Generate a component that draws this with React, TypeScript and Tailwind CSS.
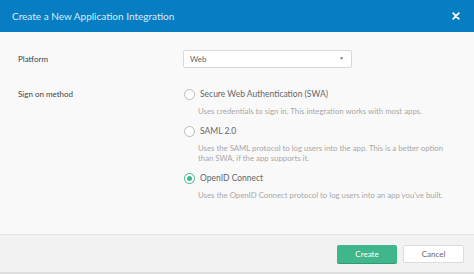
const options = [
  {
    label: "Secure Web Authentication (SWA)",
    desc: "Uses credentials to sign in. This integration works with most apps.",
  },
  {
    label: "SAML 2.0",
    desc: "Uses the SAML protocol to log users into the app. This is a better option than SWA, if the app supports it.",
  },
  {
    label: "OpenID Connect",
    desc: "Uses the OpenID Connect protocol to log users into an app you've built.",
  },
];

function Radio({ checked }: { checked?: boolean }) {
  return (
    <span
      className={`flex h-[11px] w-[11px] shrink-0 items-center justify-center rounded-full border bg-white ${
        checked ? "border-[#3fb68c]" : "border-[#b9b9b9]"
      }`}
    >
      {checked && <span className="h-[5px] w-[5px] rounded-full bg-[#3fb68c]" />}
    </span>
  );
}

export default function App() {
  return (
    <div
      className="flex h-[274px] w-[474px] flex-col bg-[#f9f9f9]"
      style={{ fontFamily: "Lato, 'Open Sans', sans-serif" }}
    >
      <div className="flex h-[32px] shrink-0 items-center justify-between bg-[#077ec3] pl-[12px] pr-[14px]">
        <span className="text-[10px] text-[#d6ecfa]">Create a New Application Integration</span>
        <svg className="h-[8px] w-[8px]" viewBox="0 0 10 10" aria-hidden>
          <path d="M1.5 1.5l7 7M8.5 1.5l-7 7" stroke="#fff" strokeWidth="2.2" strokeLinecap="round" />
        </svg>
      </div>

      <div className="flex-1 pl-[18px] pr-[20px] pt-[18px]">
        <div className="grid grid-cols-[165px_1fr] items-center">
          <span className="text-[8px] text-[#444]">Platform</span>
          <div className="flex h-[18px] w-[169px] items-center justify-between rounded-[2px] border border-[#d8d8d8] bg-white pl-[6px] pr-[7px]">
            <span className="text-[8px] text-[#666]">Web</span>
            <span className="text-[5px] text-[#777]">▼</span>
          </div>
        </div>

        <div className="mt-[20px] grid grid-cols-[165px_1fr] items-start">
          <span className="text-[8px] leading-[12px] text-[#444]">Sign on method</span>
          <div className="flex flex-col gap-[9px]">
            {options.map((o, i) => (
              <div key={o.label}>
                <div className="flex h-[12px] items-center gap-[5px] pl-[1px]">
                  <Radio checked={i === 2} />
                  <span className="text-[8.5px] text-[#666]">{o.label}</span>
                </div>
                <p className="mt-[6px] pl-[15px] text-[7.8px] leading-[10px] text-[#a8a8a8]">{o.desc}</p>
              </div>
            ))}
          </div>
        </div>
      </div>

      <div className="flex h-[38px] shrink-0 items-center justify-end gap-[6px] border-t border-[#e3e3e3] bg-[#f2f2f2] pr-[10px]">
        <button className="h-[18px] w-[60px] rounded-[2px] bg-[#3fb68c] text-[8px] text-white shadow-[0_1px_0_#2f9b74]">
          Create
        </button>
        <button className="h-[18px] w-[61px] rounded-[2px] border border-[#dcdcdc] bg-white text-[8px] text-[#666]">
          Cancel
        </button>
      </div>
      <div className="h-[2px] shrink-0 bg-[#dedede]" />
    </div>
  );
}
